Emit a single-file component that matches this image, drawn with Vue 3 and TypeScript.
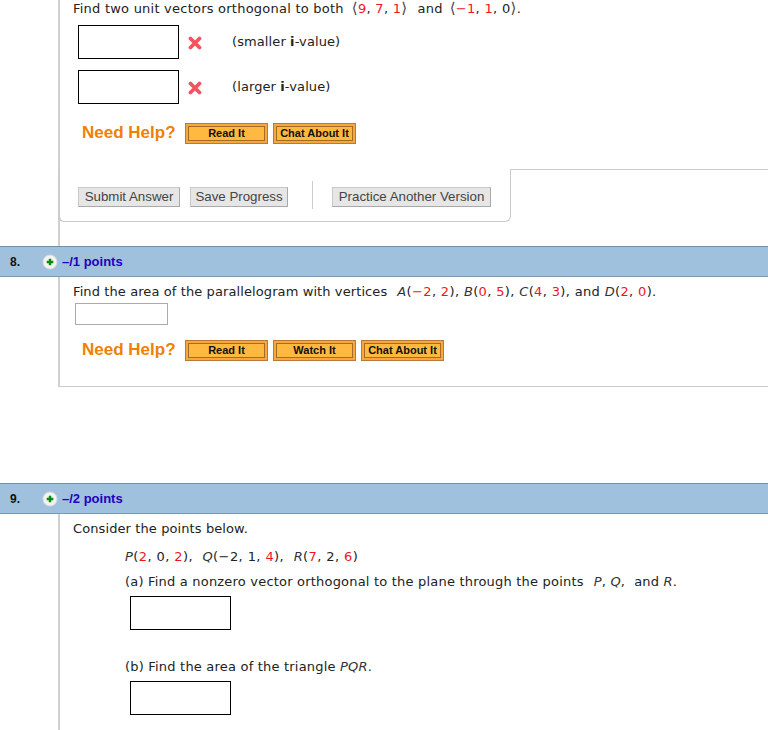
<script setup lang="ts">
interface Value {
  text: string
  red: boolean
}

interface Vec {
  label: string
  values: Value[]
}

// Randomized values are shown in red in the assignment
const red = (text: string): Value => ({ text, red: true })
const blk = (text: string): Value => ({ text, red: false })

const vecA: Value[] = [red('9'), red('7'), red('1')]
const vecB: Value[] = [red('\u22121'), red('1'), blk('0')]

const parallelogram: Vec[] = [
  { label: 'A', values: [red('\u22122'), red('2')] },
  { label: 'B', values: [red('0'), red('5')] },
  { label: 'C', values: [red('4'), red('3')] }
]
const lastVertex: Vec = { label: 'D', values: [red('2'), red('0')] }

const points: Vec[] = [
  { label: 'P', values: [red('2'), blk('0'), red('2')] },
  { label: 'Q', values: [blk('\u22122'), blk('1'), red('4')] },
  { label: 'R', values: [red('7'), blk('2'), red('6')] }
]
</script>

<template>
  <div class="page">
    <!-- Question 7, scrolled partly out of view -->
    <section class="q7">
      <p class="prompt prompt-wide">
        Find two unit vectors orthogonal to both<span class="math vec"><span class="bracket">⟨</span><template v-for="(v, i) in vecA" :key="i"><span :class="{ red: v.red }">{{ v.text }}</span><span v-if="i < 2">, </span></template><span class="bracket">⟩</span></span><span class="and">and</span><span class="math vec-b"><span class="bracket">⟨</span><template v-for="(v, i) in vecB" :key="i"><span :class="{ red: v.red }">{{ v.text }}</span><span v-if="i < 2">, </span></template><span class="bracket">⟩</span>.</span>
      </p>

      <div class="answer-row">
        <div class="box"></div>
        <svg class="cross" viewBox="0 0 14 14" width="14" height="14">
          <path d="M2.5 2.5L11.5 11.5M11.5 2.5L2.5 11.5" stroke="#f2535f" stroke-width="3.8" stroke-linecap="round" />
        </svg>
        <span class="hint">(smaller <b>i</b>-value)</span>
      </div>
      <div class="answer-row second">
        <div class="box"></div>
        <svg class="cross" viewBox="0 0 14 14" width="14" height="14">
          <path d="M2.5 2.5L11.5 11.5M11.5 2.5L2.5 11.5" stroke="#f2535f" stroke-width="3.8" stroke-linecap="round" />
        </svg>
        <span class="hint">(larger <b>i</b>-value)</span>
      </div>

      <div class="help">
        <span class="help-label">Need Help?</span>
        <button class="help-btn"><span>Read It</span></button>
        <button class="help-btn"><span>Chat About It</span></button>
      </div>

      <div class="foot">
        <div class="foot-main">
          <button class="grey-btn submit">Submit Answer</button>
          <button class="grey-btn save">Save Progress</button>
          <div class="divider"></div>
          <button class="grey-btn practice">Practice Another Version</button>
        </div>
        <div class="foot-rest"></div>
      </div>
    </section>

    <!-- Question 8 -->
    <header class="q-head">
      <span class="q-num">8.</span>
      <svg class="plus" viewBox="0 0 16 16" width="16" height="16">
        <circle cx="8" cy="8" r="7" fill="#f3f3f1" stroke="#d5dbe0" />
        <path d="M8 4.7V11.3M4.7 8H11.3" stroke="#0a8a0a" stroke-width="2.4" />
      </svg>
      <span class="q-points">–/1 points</span>
    </header>
    <section class="q8">
      <p class="prompt prompt-narrow">
        Find the area of the parallelogram with vertices<span class="math vertices"><template v-for="p in parallelogram" :key="p.label"><i class="var">{{ p.label }}</i>(<span class="red">{{ p.values[0].text }}</span>, <span class="red">{{ p.values[1].text }}</span>), </template>and <i class="var">{{ lastVertex.label }}</i>(<span class="red">{{ lastVertex.values[0].text }}</span>, <span class="red">{{ lastVertex.values[1].text }}</span>).</span>
      </p>
      <div class="grey-input"></div>
      <div class="help help-q8">
        <span class="help-label">Need Help?</span>
        <button class="help-btn"><span>Read It</span></button>
        <button class="help-btn"><span>Watch It</span></button>
        <button class="help-btn"><span>Chat About It</span></button>
      </div>
    </section>

    <!-- Question 9 -->
    <header class="q-head q9-head">
      <span class="q-num">9.</span>
      <svg class="plus" viewBox="0 0 16 16" width="16" height="16">
        <circle cx="8" cy="8" r="7" fill="#f3f3f1" stroke="#d5dbe0" />
        <path d="M8 4.7V11.3M4.7 8H11.3" stroke="#0a8a0a" stroke-width="2.4" />
      </svg>
      <span class="q-points">–/2 points</span>
    </header>
    <section class="q9">
      <p class="prompt prompt-narrow">Consider the points below.</p>
      <div class="indented">
        <p class="points">
          <template v-for="(p, idx) in points" :key="p.label"><i class="var">{{ p.label }}</i>(<template v-for="(v, i) in p.values" :key="i"><span :class="{ red: v.red }">{{ v.text }}</span><span v-if="i < 2">, </span></template>)<span v-if="idx < 2" class="sep">, </span></template>
        </p>
        <p class="part">
          (a) Find a nonzero vector orthogonal to the plane through the points<i class="var p-var">P</i>, <i class="var">Q</i>,<span class="and-a">and</span> <i class="var">R</i>.
        </p>
        <div class="box"></div>
        <p class="part part-b">(b) Find the area of the triangle <i class="var">PQR</i>.</p>
        <div class="box"></div>
      </div>
    </section>
  </div>
</template>

<style scoped>
.page {
  width: 768px;
  height: 730px;
  overflow: hidden;
  background: #fff;
  color: #222;
  font-family: "DejaVu Sans", Verdana, sans-serif;
  font-size: 13px;
}

p {
  margin: 0;
}

.red {
  color: #f0141e;
}

.var {
  color: #333;
}

.math {
  letter-spacing: 0.3px;
}

.vec {
  margin-left: 8px;
}

.vec-b {
  margin-left: 7px;
}

.vertices {
  margin-left: 10px;
  letter-spacing: 0.35px;
}

.and {
  margin-left: 10px;
}

.bracket {
  font-size: 15px;
  line-height: 16px;
  color: #444;
}

.prompt {
  line-height: 16px;
  white-space: nowrap;
}

.prompt-wide {
  height: 16px;
  letter-spacing: 0.23px;
}

.prompt-narrow {
  letter-spacing: 0.1px;
}

.q7 {
  margin-left: 58px;
  height: 246px;
  box-sizing: border-box;
  border-left: 2px solid #d0d0d0;
  padding-left: 13px;
}

.answer-row {
  display: flex;
  align-items: flex-start;
  margin: 9px 0 0 5px;
  height: 36px;
}

.box {
  width: 99px;
  height: 32px;
  border: 1px solid #000;
  flex: none;
}

.cross {
  margin: 11px 0 0 9px;
}

.hint {
  margin: 9px 0 0 30px;
  line-height: 16px;
  letter-spacing: 0.1px;
}

.help {
  display: flex;
  align-items: center;
  gap: 5px;
  margin: 17px 0 0 9px;
}

.help-label {
  color: #ee8104;
  font: bold 17px "Liberation Sans", Arial, sans-serif;
  width: 98px;
  margin-top: -2px;
  white-space: nowrap;
}

.help-btn {
  box-sizing: border-box;
  width: 83px;
  height: 21px;
  padding: 2px;
  border: 1px solid #b9793a;
  background: #f6a83e;
  font: bold 11px "Liberation Sans", Arial, sans-serif;
  color: #111;
}

.help-btn span {
  display: block;
  height: 15px;
  line-height: 13px;
  box-sizing: border-box;
  border: 1px solid #a86a22;
  background: #ffb940;
  white-space: nowrap;
}

.foot {
  display: flex;
  margin-top: 25px;
  margin-left: -15px;
}

.foot-main {
  flex: none;
  display: flex;
  align-items: flex-start;
  box-sizing: border-box;
  width: 453px;
  height: 53px;
  border-right: 1px solid #ccc;
  border-bottom: 1px solid #ccc;
  border-left: 2px solid #ccc;
  border-radius: 0 0 6px 6px;
  padding: 18px 0 0 18px;
}

.foot-rest {
  flex: 1;
  border-top: 1px solid #ccc;
}

.grey-btn {
  box-sizing: border-box;
  height: 20px;
  padding: 0;
  border: 1px solid #c8c8c8;
  border-right-color: #a9a9a9;
  border-bottom-color: #a9a9a9;
  background: #e6e6e6;
  color: #444;
  font: 13.3px/18px "Liberation Sans", Arial, sans-serif;
  white-space: nowrap;
}

.submit {
  width: 102px;
}

.save {
  width: 98px;
  margin-left: 10px;
}

.divider {
  width: 1px;
  height: 28px;
  margin: -6px 0 0 24px;
  background: #ccc;
}

.practice {
  width: 159px;
  margin-left: 19px;
}

.q-head {
  display: flex;
  align-items: center;
  box-sizing: border-box;
  height: 31px;
  background: #9fc1de;
  border-top: 1px solid #6f8faa;
  border-bottom: 1px solid #7d9ab3;
}

.q-num {
  width: 42px;
  padding-left: 10px;
  box-sizing: border-box;
  font: bold 12px "Liberation Sans", Arial, sans-serif;
  color: #111;
}

.plus {
  flex: none;
}

.q-points {
  margin-left: 4px;
  font: bold 13px "Liberation Sans", Arial, sans-serif;
  color: #2200c1;
}

.q8 {
  margin-left: 58px;
  height: 110px;
  box-sizing: border-box;
  border-left: 2px solid #d0d0d0;
  border-bottom: 1px solid #ccc;
  padding: 7px 0 0 13px;
}

.grey-input {
  box-sizing: border-box;
  width: 93px;
  height: 22px;
  margin: 3px 0 0 2px;
  border: 1px solid #aaa;
}

.help-q8 {
  margin-top: 15px;
}

.q9-head {
  margin-top: 96px;
}

.q9 {
  margin-left: 58px;
  height: 231px;
  box-sizing: border-box;
  border-left: 2px solid #d0d0d0;
  padding: 7px 0 0 13px;
}

.indented {
  margin: 12px 0 0 52px;
}

.points {
  line-height: 16px;
  white-space: pre;
  letter-spacing: 0.4px;
}

.sep {
  margin-right: 5px;
}

.part {
  margin-top: 9px;
  line-height: 16px;
  white-space: nowrap;
  letter-spacing: 0.2px;
}

.p-var {
  margin-left: 10px;
}

.and-a {
  margin-left: 9px;
}

.indented .box {
  margin: 6px 0 0 5px;
}

.part-b {
  margin-top: 29px;
}
</style>
